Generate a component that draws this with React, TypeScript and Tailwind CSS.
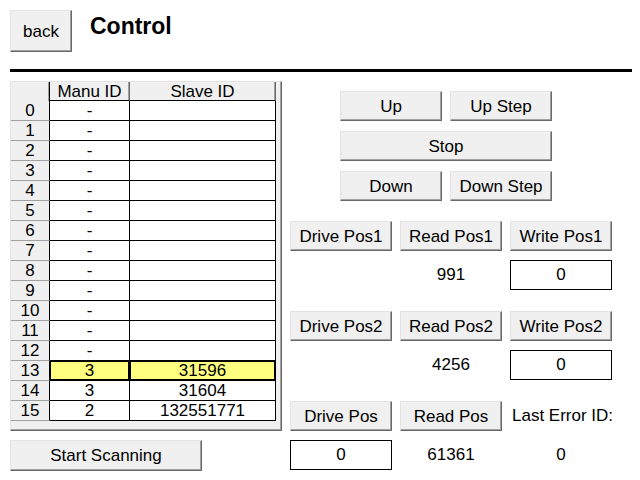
import React from 'react';

const slaves: { manu: string; slave: string }[] = [
  ...Array.from({ length: 13 }, () => ({ manu: '-', slave: '' })),
  { manu: '3', slave: '31596' },
  { manu: '3', slave: '31604' },
  { manu: '2', slave: '132551771' },
];

const SELECTED = 13;

const Btn = ({ label, className = '' }: { label: string; className?: string }) => (
  <button
    className={`box-border h-[30px] bg-[#f0f0f0] border-t border-l border-t-[#e3e3e3] border-l-[#e3e3e3] border-r border-b border-r-[#696969] border-b-[#696969] shadow-[inset_-1px_-1px_0_#a0a0a0] text-[17px] leading-none text-black whitespace-nowrap ${className}`}
  >
    {label}
  </button>
);

const Field = ({ value }: { value: string }) => (
  <div className="box-border w-[102px] h-[30px] border border-black bg-white flex items-center justify-center text-[17px]">
    {value}
  </div>
);

const Value = ({ value }: { value: string }) => (
  <div className="w-[102px] h-[30px] flex items-center justify-center text-[17px]">{value}</div>
);

export default function App() {
  return (
    <div
      className="w-[640px] h-[480px] bg-white text-black overflow-hidden"
      style={{ fontFamily: '"Liberation Sans", Arial, sans-serif' }}
    >
      {/* Header */}
      <div className="flex items-start pt-[10px] pl-[10px]">
        <Btn label="back" className="w-[62px] h-[42px]" />
        <div className="ml-[18px] mt-[2px] text-[23px] font-bold leading-[28px]">Control</div>
      </div>
      <div className="mt-[17px] ml-[10px] w-[622px] h-[3px] bg-black" />

      <div className="flex mt-[9px] pl-[10px]">
        {/* Left: table + scan */}
        <div className="flex flex-col">
          <div className="box-border w-[272px] h-[350px] bg-[#f0f0f0] border-t border-l border-t-[#e3e3e3] border-l-[#e3e3e3] border-r border-b border-r-[#696969] border-b-[#696969] shadow-[inset_-1px_-1px_0_#a0a0a0]">
            <div className="grid grid-cols-[39px_80px_146px] text-[17px] leading-none">
              <div className="box-border h-[19px] border-r border-r-black shadow-[inset_-1px_0_0_#a0a0a0]" />
              <div className="box-border h-[19px] flex items-center justify-center border-r border-b border-r-[#696969] border-b-black shadow-[inset_-1px_0_0_#a0a0a0]">
                Manu ID
              </div>
              <div className="box-border h-[19px] flex items-center justify-center border-r border-b border-r-[#696969] border-b-black shadow-[inset_-1px_0_0_#a0a0a0]">
                Slave ID
              </div>
              {slaves.map((s, i) => (
                <React.Fragment key={i}>
                  <div className="box-border h-[20px] flex items-center justify-center border-r border-b border-r-black border-b-[#a0a0a0]">
                    {i}
                  </div>
                  <div
                    className={`box-border h-[20px] flex items-center justify-center border-r border-b border-black ${
                      i === SELECTED ? 'bg-[#ffff80] shadow-[inset_0_0_0_1px_black]' : 'bg-white'
                    }`}
                  >
                    {s.manu}
                  </div>
                  <div
                    className={`box-border h-[20px] flex items-center justify-center border-r border-b border-black ${
                      i === SELECTED ? 'bg-[#ffff80] shadow-[inset_0_0_0_1px_black]' : 'bg-white'
                    }`}
                  >
                    {s.slave}
                  </div>
                </React.Fragment>
              ))}
            </div>
          </div>
          <Btn label="Start Scanning" className="mt-[9px] w-[192px] h-[31px]" />
        </div>

        {/* Right: controls */}
        <div className="flex flex-col ml-[8px] pt-[10px]">
          <div className="flex gap-[8px] ml-[50px]">
            <Btn label="Up" className="w-[102px]" />
            <Btn label="Up Step" className="w-[102px]" />
          </div>
          <div className="flex mt-[10px] ml-[50px]">
            <Btn label="Stop" className="w-[212px]" />
          </div>
          <div className="flex gap-[8px] mt-[10px] ml-[50px]">
            <Btn label="Down" className="w-[102px]" />
            <Btn label="Down Step" className="w-[102px]" />
          </div>

          <div className="flex gap-[8px] mt-[20px]">
            <Btn label="Drive Pos1" className="w-[102px]" />
            <Btn label="Read Pos1" className="w-[102px]" />
            <Btn label="Write Pos1" className="w-[102px]" />
          </div>
          <div className="flex gap-[8px] mt-[9px]">
            <div className="w-[102px]" />
            <Value value="991" />
            <Field value="0" />
          </div>

          <div className="flex gap-[8px] mt-[21px]">
            <Btn label="Drive Pos2" className="w-[102px]" />
            <Btn label="Read Pos2" className="w-[102px]" />
            <Btn label="Write Pos2" className="w-[102px]" />
          </div>
          <div className="flex gap-[8px] mt-[9px]">
            <div className="w-[102px]" />
            <Value value="4256" />
            <Field value="0" />
          </div>

          <div className="flex gap-[8px] mt-[21px]">
            <Btn label="Drive Pos" className="w-[102px]" />
            <Btn label="Read Pos" className="w-[102px]" />
            <div className="h-[30px] flex items-center pl-[2px] text-[17px] whitespace-nowrap">Last Error ID:</div>
          </div>
          <div className="flex gap-[8px] mt-[9px]">
            <Field value="0" />
            <Value value="61361" />
            <Value value="0" />
          </div>
        </div>
      </div>
    </div>
  );
}
